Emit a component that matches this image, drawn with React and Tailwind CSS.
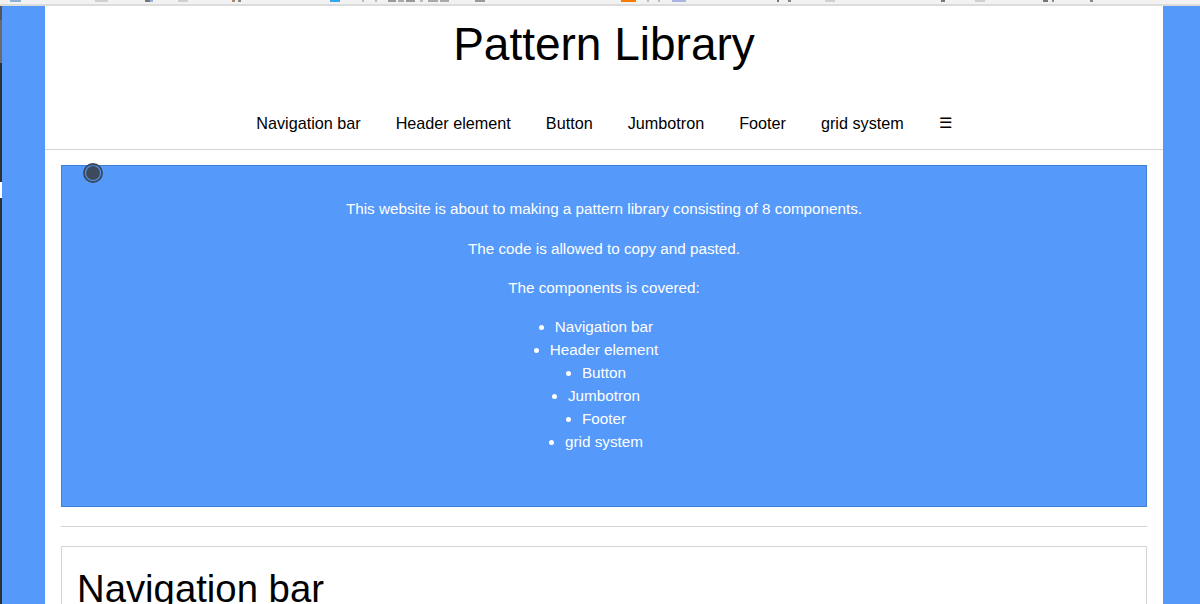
import React from 'react';

const navItems = ['Navigation bar', 'Header element', 'Button', 'Jumbotron', 'Footer', 'grid system'];
const components = ['Navigation bar', 'Header element', 'Button', 'Jumbotron', 'Footer', 'grid system'];

// bottom edge of the browser tab strip, cut off by the screenshot
const tabMarks = [
  [10, 11, '#8fb0cf'], [95, 13, '#d0d0d0'], [145, 5, '#777777'], [150, 3, '#8fb5dc'], [178, 10, '#d0d0d0'],
  [232, 3, '#a98a6a'], [238, 3, '#888888'], [330, 10, '#33a8f0'], [362, 2, '#bbbbbb'], [375, 2, '#bbbbbb'],
  [388, 8, '#999999'], [398, 6, '#aaaaaa'], [406, 9, '#999999'], [420, 3, '#bbbbbb'], [428, 10, '#aaaaaa'],
  [440, 9, '#aaaaaa'], [475, 10, '#999999'], [621, 15, '#f57c00'], [647, 2, '#bbbbbb'], [658, 2, '#bbbbbb'],
  [672, 14, '#aab6e2'], [777, 2, '#777777'], [788, 3, '#888888'], [825, 10, '#d0d0d0'], [941, 4, '#777777'],
  [975, 10, '#d0d0d0'], [1043, 5, '#777777'], [1052, 2, '#888888'], [1090, 3, '#888888'],
];

function TabStrip() {
  return (
    <div className="h-[6px] bg-[#f2f2f2] border-b-2 border-[#dcdcdc]">
      <svg width="1200" height="2" className="block">
        {tabMarks.map(([x, w, c]) => (
          <rect key={x} x={x} y="0" width={w} height="2" fill={c} />
        ))}
      </svg>
    </div>
  );
}

function EdgeStrip() {
  return (
    <div className="w-[2px] flex flex-col">
      <div className="h-[14px] bg-[#555555]" />
      <div className="h-[43px] bg-[#6b6b6b]" />
      <div className="h-[119px] bg-[#2b2f36]" />
      <div className="h-[16px] bg-white" />
      <div className="flex-1 bg-[#2b2f36]" />
    </div>
  );
}

export default function App() {
  return (
    <div className="h-[604px] overflow-hidden flex flex-col bg-[#5599fa] text-black font-['Liberation_Sans',Arial,sans-serif]">
      <TabStrip />
      <div className="flex flex-1 min-h-0">
        <EdgeStrip />
        <div className="ml-[43px] mr-[37px] flex-1 bg-white relative">
          {/* Header */}
          <header className="h-[144px] border-b border-[#d4d4d4] flex flex-col items-center">
            <h1 className="text-[46px] leading-[56px] mt-[10px] font-normal">Pattern Library</h1>
            <nav className="flex items-center gap-[35px] mt-[39px] text-[16.2px] leading-[24px]">
              {navItems.map((item) => (
                <a key={item}>{item}</a>
              ))}
              <span className="text-[15px]">☰</span>
            </nav>
          </header>

          {/* Jumbotron */}
          <section className="mx-4 mt-[15px] h-[342px] bg-[#5599fa] border border-[#3f7fd8] text-white text-center text-[15.25px] leading-[23px] pt-[31px]">
            <p className="mb-[16.5px]">This website is about to making a pattern library consisting of 8 components.</p>
            <p className="mb-[16.5px]">The code is allowed to copy and pasted.</p>
            <p className="mb-[15.5px]">The components is covered:</p>
            <ul className="list-disc list-outside">
              {components.map((item) => (
                <li key={item} className="w-fit mx-auto">{item}</li>
              ))}
            </ul>
          </section>

          <hr className="mx-4 mt-[19px] border-t border-[#d4d4d4]" />

          {/* Navigation bar card */}
          <section className="mx-4 mt-[19px] h-[100px] border border-[#d4d4d4] pl-[15px] pt-[18px]">
            <h2 className="text-[38.3px] leading-[48px] font-normal">Navigation bar</h2>
          </section>

          {/* cursor highlight from the screen recorder */}
          <div className="absolute left-[38px] top-[157px] w-5 h-5 rounded-full border-2 border-[#3d4a5c] p-px">
            <div className="w-full h-full rounded-full bg-[#3d4a5c]" />
          </div>
        </div>
      </div>
    </div>
  );
}
